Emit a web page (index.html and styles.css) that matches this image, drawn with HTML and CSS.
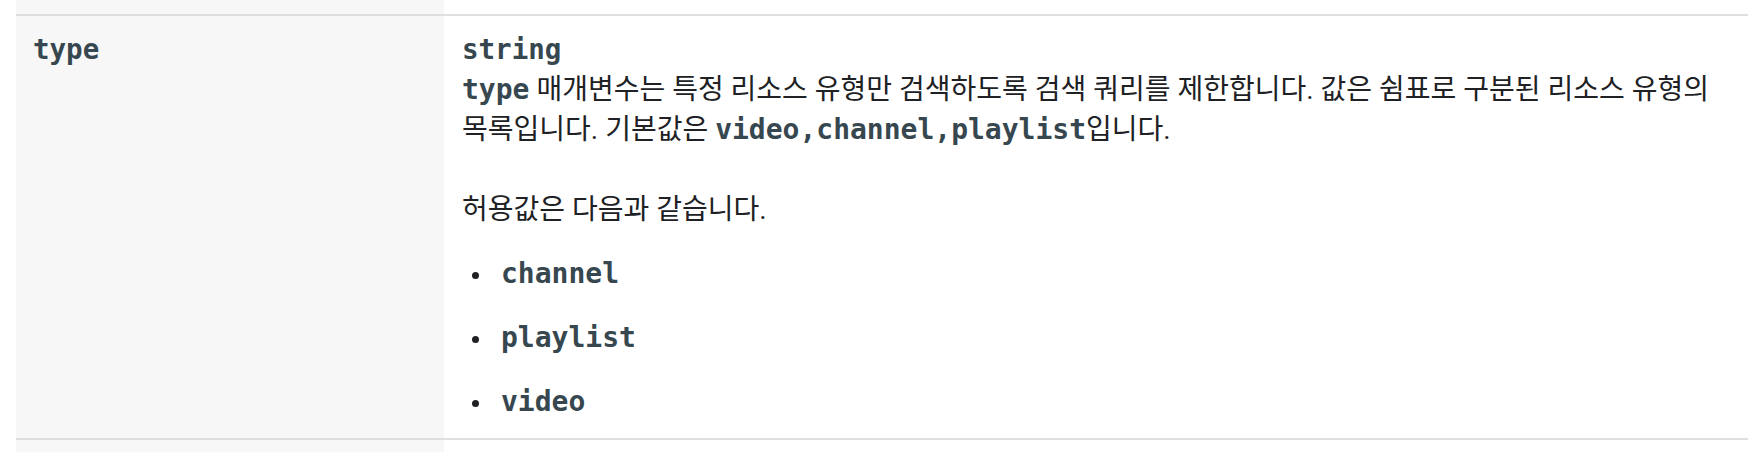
FILE: index.html
```html
<!DOCTYPE html>
<html lang="ko">
<head>
<meta charset="UTF-8" />
<title>매개변수 - type</title>
<link rel="stylesheet" href="styles.css">
</head>
<body>

<div class="params">
  <div class="row row-edge">
    <div class="name"></div>
    <div class="desc"></div>
  </div>

  <div class="row row-param">
    <div class="name"><code>type</code></div>
    <div class="desc">
      <code class="param-type">string</code><br>
      <code>type</code> 매개변수는 특정 리소스 유형만 검색하도록 검색 쿼리를 제한합니다. 값은 쉼표로 구분된 리소스 유형의 목록입니다. 기본값은 <code>video,channel,playlist</code>입니다.<br><br>허용값은 다음과 같습니다.
      <ul>
        <li><code>channel</code></li>
        <li><code>playlist</code></li>
        <li><code>video</code></li>
      </ul>
    </div>
  </div>

  <div class="row row-edge">
    <div class="name"></div>
    <div class="desc"></div>
  </div>
</div>

</body>
</html>
```

FILE: styles.css
```css
body {
  margin: 0;
  background: #fff;
  font-family: Roboto, "Noto Sans CJK KR", sans-serif;
  font-size: 28px;
  line-height: 40px;
  color: #202124;
}
.params {
  padding-left: 16px;
}
.row {
  display: grid;
  grid-template-columns: 428px 1fr;
}
.row-edge {
  height: 14px;
}
.row-param {
  border-top: 2px solid #dfdfe2;
  border-bottom: 2px solid #dfdfe2;
}
.name {
  background: #f7f7f7;
}
.row-param .name {
  padding: 14px 17px;
}
.row-param .desc {
  padding: 14px 16px 16px 18px;
  word-break: keep-all;
}
code {
  font-family: "DejaVu Sans Mono", "Liberation Mono", monospace;
  font-weight: 700;
  font-size: 28px;
  line-height: 1;
  color: #37474f;
}
.name code,
.param-type {
  font-size: 27.5px;
}
ul {
  margin: 0;
  padding-left: 10px;
  list-style: none;
}
li {
  margin-top: 24px;
}
li::before {
  content: "";
  display: inline-block;
  width: 7px;
  height: 7px;
  border-radius: 50%;
  background: #202124;
  margin-right: 22px;
  vertical-align: middle;
}
```
